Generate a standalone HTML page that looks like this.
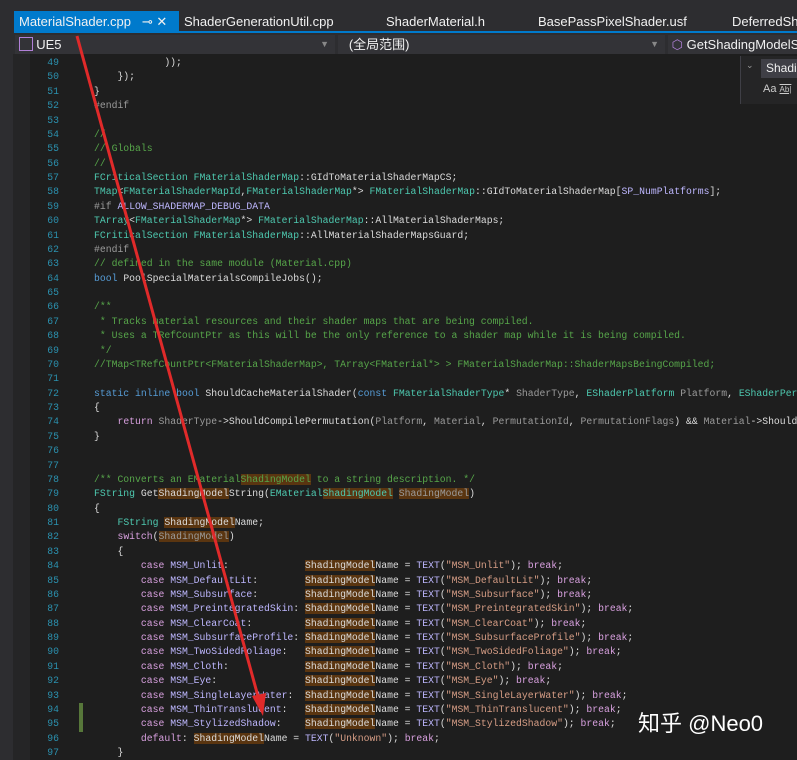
<!DOCTYPE html>
<html><head><meta charset="utf-8"><style>
html,body{margin:0;padding:0;background:#1e1e1e;width:797px;height:760px;overflow:hidden;position:relative;font-family:"Liberation Sans","Noto Sans CJK SC",sans-serif}
.tabs{position:absolute;left:0;top:0;width:797px;height:33px;background:#2d2d30}
.tab{position:absolute;top:11px;height:21px;line-height:21px;font-size:13px;color:#f1f1f1;white-space:nowrap}
.act{background:#007acc;left:14px;width:165px;padding-left:5px;box-sizing:border-box}
.blue{position:absolute;left:14px;top:31px;width:783px;height:2px;background:#007acc}
.nav{position:absolute;left:0;top:33px;width:797px;height:21px;background:#2d2d30}
.dd{position:absolute;top:35px;height:19px;background:#333337;color:#f1f1f1;font-size:13px;line-height:19px;white-space:nowrap;overflow:hidden}
.side{position:absolute;left:0;top:0;width:13px;height:760px;background:#2d2d30}
.gut{position:absolute;left:13px;top:54px;width:17px;height:706px;background:#252526}
pre{margin:0;position:absolute;font-family:"Liberation Mono",monospace;font-size:9.77px;line-height:14.38px;white-space:pre;overflow:hidden}
.ln{left:30px;top:56px;width:29px;text-align:right;color:#2b91af}
.code{left:94px;top:56px;width:703px;height:704px;color:#dcdcdc}
.t{color:#4ec9b0}.k{color:#569cd6}.p{color:#d8a0df}.s{color:#d69d85}.c{color:#57a64a}.m{color:#beb7ff}.g{color:#9b9b9b}
.h{background:#5a3510}
.find{position:absolute;left:740px;top:56px;width:57px;height:48px;background:#252526;border-left:1px solid #3f3f46}
</style></head><body>
<div class="side"></div>
<div class="tabs"></div>
<div class="tab act">MaterialShader.cpp &nbsp;&nbsp;⊸ ✕</div>
<div class="tab" style="left:184px">ShaderGenerationUtil.cpp</div>
<div class="tab" style="left:386px">ShaderMaterial.h</div>
<div class="tab" style="left:538px">BasePassPixelShader.usf</div>
<div class="tab" style="left:732px">DeferredSh</div>
<div class="blue"></div>
<div class="nav"></div>
<div class="dd" style="left:15px;width:320px">&nbsp;<span style="display:inline-block;width:12px;height:12px;border:1px solid #b180d7;vertical-align:-2px;font-size:8px"></span> UE5<span style="position:absolute;right:6px;color:#888;font-size:9px">▼</span></div>
<div class="dd" style="left:338px;width:327px">&nbsp;&nbsp;&nbsp;(全局范围)<span style="position:absolute;right:6px;color:#888;font-size:9px">▼</span></div>
<div class="dd" style="left:668px;width:129px">&nbsp;<span style="color:#b180d7">⬡</span> GetShadingModelS</div>
<div class="gut"></div>
<div style="position:absolute;left:79px;top:703px;width:4px;height:29px;background:#57773a"></div>
<pre class="ln">49
50
51
52
53
54
55
56
57
58
59
60
61
62
63
64
65
66
67
68
69
70
71
72
73
74
75
76
77
78
79
80
81
82
83
84
85
86
87
88
89
90
91
92
93
94
95
96
97</pre>
<pre class="code">            ));
    });
}
<span class="g">#endif</span>

<span class="c">//</span>
<span class="c">// Globals</span>
<span class="c">//</span>
<span class="t">FCriticalSection</span> <span class="t">FMaterialShaderMap</span>::GIdToMaterialShaderMapCS;
<span class="t">TMap</span>&lt;<span class="t">FMaterialShaderMapId</span>,<span class="t">FMaterialShaderMap</span>*&gt; <span class="t">FMaterialShaderMap</span>::GIdToMaterialShaderMap[<span class="m">SP_NumPlatforms</span>];
<span class="g">#if</span> <span class="m">ALLOW_SHADERMAP_DEBUG_DATA</span>
<span class="t">TArray</span>&lt;<span class="t">FMaterialShaderMap</span>*&gt; <span class="t">FMaterialShaderMap</span>::AllMaterialShaderMaps;
<span class="t">FCriticalSection</span> <span class="t">FMaterialShaderMap</span>::AllMaterialShaderMapsGuard;
<span class="g">#endif</span>
<span class="c">// defined in the same module (Material.cpp)</span>
<span class="k">bool</span> PoolSpecialMaterialsCompileJobs();

<span class="c">/**</span>
<span class="c"> * Tracks material resources and their shader maps that are being compiled.</span>
<span class="c"> * Uses a TRefCountPtr as this will be the only reference to a shader map while it is being compiled.</span>
<span class="c"> */</span>
<span class="c">//TMap&lt;TRefCountPtr&lt;FMaterialShaderMap&gt;, TArray&lt;FMaterial*&gt; &gt; FMaterialShaderMap::ShaderMapsBeingCompiled;</span>

<span class="k">static</span> <span class="k">inline</span> <span class="k">bool</span> ShouldCacheMaterialShader(<span class="k">const</span> <span class="t">FMaterialShaderType</span>* <span class="g">ShaderType</span>, <span class="t">EShaderPlatform</span> <span class="g">Platform</span>, <span class="t">EShaderPermutationFlags</span>
{
    <span class="p">return</span> <span class="g">ShaderType</span>-&gt;ShouldCompilePermutation(<span class="g">Platform</span>, <span class="g">Material</span>, <span class="g">PermutationId</span>, <span class="g">PermutationFlags</span>) &amp;&amp; <span class="g">Material</span>-&gt;ShouldCache
}


<span class="c">/** Converts an EMaterial<span class="h">ShadingModel</span> to a string description. */</span>
<span class="t">FString</span> Get<span class="h">ShadingModel</span>String(<span class="t">EMaterial<span class="h">ShadingModel</span></span> <span class="g h">ShadingModel</span>)
{
    <span class="t">FString</span> <span class="h">ShadingModel</span>Name;
    <span class="p">switch</span>(<span class="g h">ShadingModel</span>)
    {
        <span class="p">case</span> <span class="m">MSM_Unlit</span>:             <span class="h">ShadingModel</span>Name = <span class="m">TEXT</span>(<span class="s">"MSM_Unlit"</span>); <span class="p">break</span>;
        <span class="p">case</span> <span class="m">MSM_DefaultLit</span>:        <span class="h">ShadingModel</span>Name = <span class="m">TEXT</span>(<span class="s">"MSM_DefaultLit"</span>); <span class="p">break</span>;
        <span class="p">case</span> <span class="m">MSM_Subsurface</span>:        <span class="h">ShadingModel</span>Name = <span class="m">TEXT</span>(<span class="s">"MSM_Subsurface"</span>); <span class="p">break</span>;
        <span class="p">case</span> <span class="m">MSM_PreintegratedSkin</span>: <span class="h">ShadingModel</span>Name = <span class="m">TEXT</span>(<span class="s">"MSM_PreintegratedSkin"</span>); <span class="p">break</span>;
        <span class="p">case</span> <span class="m">MSM_ClearCoat</span>:         <span class="h">ShadingModel</span>Name = <span class="m">TEXT</span>(<span class="s">"MSM_ClearCoat"</span>); <span class="p">break</span>;
        <span class="p">case</span> <span class="m">MSM_SubsurfaceProfile</span>: <span class="h">ShadingModel</span>Name = <span class="m">TEXT</span>(<span class="s">"MSM_SubsurfaceProfile"</span>); <span class="p">break</span>;
        <span class="p">case</span> <span class="m">MSM_TwoSidedFoliage</span>:   <span class="h">ShadingModel</span>Name = <span class="m">TEXT</span>(<span class="s">"MSM_TwoSidedFoliage"</span>); <span class="p">break</span>;
        <span class="p">case</span> <span class="m">MSM_Cloth</span>:             <span class="h">ShadingModel</span>Name = <span class="m">TEXT</span>(<span class="s">"MSM_Cloth"</span>); <span class="p">break</span>;
        <span class="p">case</span> <span class="m">MSM_Eye</span>:               <span class="h">ShadingModel</span>Name = <span class="m">TEXT</span>(<span class="s">"MSM_Eye"</span>); <span class="p">break</span>;
        <span class="p">case</span> <span class="m">MSM_SingleLayerWater</span>:  <span class="h">ShadingModel</span>Name = <span class="m">TEXT</span>(<span class="s">"MSM_SingleLayerWater"</span>); <span class="p">break</span>;
        <span class="p">case</span> <span class="m">MSM_ThinTranslucent</span>:   <span class="h">ShadingModel</span>Name = <span class="m">TEXT</span>(<span class="s">"MSM_ThinTranslucent"</span>); <span class="p">break</span>;
        <span class="p">case</span> <span class="m">MSM_StylizedShadow</span>:    <span class="h">ShadingModel</span>Name = <span class="m">TEXT</span>(<span class="s">"MSM_StylizedShadow"</span>); <span class="p">break</span>;
        <span class="p">default</span>: <span class="h">ShadingModel</span>Name = <span class="m">TEXT</span>(<span class="s">"Unknown"</span>); <span class="p">break</span>;
    }</pre>
<div class="find">
<div style="position:absolute;left:20px;top:3px;width:37px;height:19px;background:#3f3f46;color:#f1f1f1;font-size:12px;line-height:19px;padding-left:5px;box-sizing:border-box;overflow:hidden">Shadin</div>
<div style="position:absolute;left:5px;top:4px;color:#999;font-size:9px">⌄</div>
<div style="position:absolute;left:22px;top:27px;color:#ccc;font-size:11px">Aa <span style="font-size:8px;text-decoration:overline underline">Ab|</span></div>
</div>
<svg style="position:absolute;left:0;top:0" width="797" height="760">
<line x1="77" y1="36" x2="259" y2="700" stroke="#e02a2a" stroke-width="3"/>
<polygon points="263,716 252,696 266,693" fill="#e02a2a"/>
</svg>
<div style="position:absolute;left:638px;top:706px;color:#fff;font-size:22px;font-family:'Liberation Sans','Noto Sans CJK SC',sans-serif;white-space:nowrap">知乎 @Neo0</div>
</body></html>
